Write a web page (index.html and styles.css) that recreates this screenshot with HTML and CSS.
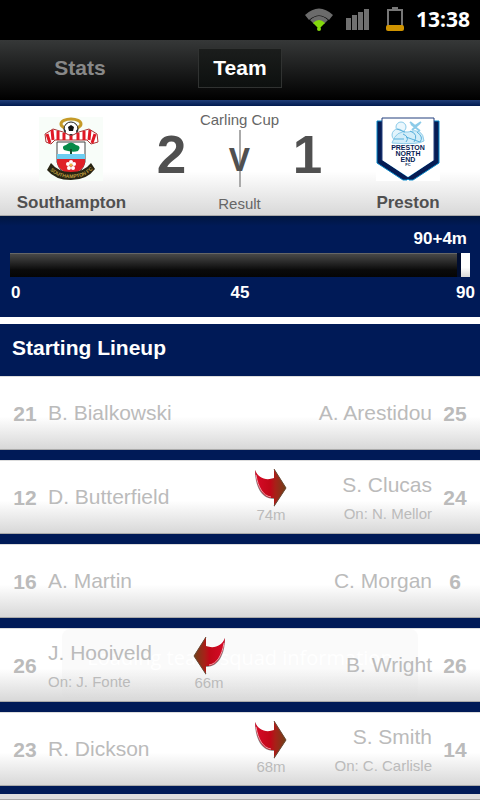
FILE: index.html
```html
<!DOCTYPE html>
<html lang="en">
<head>
    <meta charset="UTF-8">
    <meta name="viewport" content="width=device-width, initial-scale=1.0">
    <title>Southampton v Preston</title>
    <link rel="stylesheet" href="styles.css">
</head>
<body>

    <!-- arrow shared by all the substitutions -->
    <svg class="defs" width="0" height="0" aria-hidden="true">
        <defs>
            <linearGradient id="subRed" x1="0" y1="0" x2="1" y2="0">
                <stop offset="0" stop-color="#d80a28"/>
                <stop offset="0.5" stop-color="#c00818"/>
                <stop offset="0.65" stop-color="#a82018"/>
                <stop offset="1" stop-color="#704018"/>
            </linearGradient>
            <symbol id="subArrow" viewBox="0 0 34 40">
                <path d="M1 2 C1 16 6 31 20 31 V39 L32 20 L20 1 V12 C11 14 4 11 1 2 Z" fill="#555" opacity="0.7"/>
                <path d="M1 2 C4 10 12 13 20 10 V1 L32 20 L20 38 V30 C8 31 2 17 1 2 Z" fill="url(#subRed)"/>
                <path d="M2 7 C4 19 9 28 17 29" fill="none" stroke="#eda0a8" stroke-width="1"/>
                <path d="M20 1 L32 20 L20 38" fill="none" stroke="#6b4a35" stroke-width="1"/>
            </symbol>
        </defs>
    </svg>

    <div class="status-bar">
        <svg width="30" height="26" viewBox="0 0 30 26" aria-hidden="true">
            <path d="M1 8 Q15 -5 29 8 L25 13 Q15 4 5 13 Z" fill="#6b6b6b"/>
            <path d="M6 13 Q15 5 24 13 L20 17 Q15 12 10 17 Z" fill="#6b6b6b"/>
            <path d="M9 16 Q15 10 21 16 L16 21 H14 Z" fill="#84d80c"/>
            <circle cx="15" cy="22" r="2" fill="#84d80c"/>
        </svg>
        <svg width="24" height="24" viewBox="0 0 24 24" aria-hidden="true">
            <path d="M0 10h5v12H0z M6 7h5v15H6z M12 4h5v18h-5z M18 1h5v21h-5z" fill="#707070"/>
        </svg>
        <svg class="battery" width="18" height="26" viewBox="0 0 18 26" aria-hidden="true">
            <path d="M2 19 V3 H16 V19" fill="none" stroke="#777" stroke-width="2"/>
            <rect x="6" y="0" width="6" height="3" fill="#777"/>
            <rect x="0" y="18" width="18" height="6" rx="2" fill="#cf9300"/>
        </svg>
        <span class="clock">13:38</span>
    </div>

    <nav class="tabs">
        <button class="tab" type="button">Stats</button>
        <button class="tab active" type="button">Team</button>
    </nav>

    <section class="match">
        <div class="team">
            <svg class="badge" viewBox="0 0 64 64" aria-hidden="true">
                <rect width="64" height="64" fill="#f8fdf9"/>
                <ellipse cx="32" cy="7" rx="10" ry="5" fill="none" stroke="#c59a28" stroke-width="3"/>
                <circle cx="32" cy="12" r="7" fill="#fff" stroke="#222" stroke-width="1"/>
                <path d="M29 10 l3 -2 3 2 -1 4 h-4z M25 11 l2 3 -1 2z M39 11 l-2 3 1 2z M29 18 l3 -1 3 1 -3 2z" fill="#111"/>
                <path d="M6 17 L14 12 L24 15 L32 19 L40 15 L50 12 L58 17 L59 25 L52 27 L48 23 L16 23 L12 27 L7 25 Z" fill="#fff" stroke="#a33" stroke-width="1"/>
                <path d="M8 17l3 9 M13 13l1 10 M19 14v9 M25 16v7 M32 19v4 M39 16v7 M45 14v9 M51 13l-1 10 M56 17l-3 9" stroke="#e01825" stroke-width="3"/>
                <path d="M18 25 H46 V45 Q44 55 32 60 Q20 55 18 45 Z" fill="#fff" stroke="#444" stroke-width="1"/>
                <path d="M25 33 Q22 29 27 28 Q32 23 37 28 Q43 29 39 34 Q34 36 25 33Z" fill="#078a48"/>
                <path d="M31 32h2v5h-2z" fill="#174f2c"/>
                <rect x="18" y="37" width="28" height="5" fill="#6ccdf0"/>
                <path d="M18 42 H46 V46 Q44 54 32 58 Q20 54 18 46Z" fill="#df2028"/>
                <g fill="#fff">
                    <circle cx="32" cy="45" r="2"/><circle cx="35" cy="47" r="2"/><circle cx="34" cy="51" r="2"/>
                    <circle cx="30" cy="51" r="2"/><circle cx="29" cy="47" r="2"/>
                </g>
                <circle cx="32" cy="48" r="1.5" fill="#ebb743"/>
                <path d="M8 53 L12 46 Q19 55 32 55 Q45 55 52 46 L56 52 Q48 63 32 63 Q16 63 8 53Z" fill="#282513"/>
                <path id="saintsText" d="M10 52 Q18 61 32 61 Q46 61 55 51" fill="none"/>
                <text class="ribbon"><textPath href="#saintsText" startOffset="50%">SOUTHAMPTON FC</textPath></text>
            </svg>
            <h2 class="team-name">Southampton</h2>
        </div>
        <div class="score">2</div>
        <div class="versus">
            <span>Carling Cup</span>
            <span class="v">V</span>
            <span>Result</span>
        </div>
        <div class="score">1</div>
        <div class="team">
            <svg class="badge" viewBox="0 0 64 64" aria-hidden="true">
                <rect width="64" height="64" fill="#fff"/>
                <path d="M1 4 H7 V43 L32 60 L57 43 V4 H63 V46 L37 63 H33 L32 62 L31 63 H27 L1 46 Z" fill="#061c54" stroke="#0788c8" stroke-width="1"/>
                <path d="M6 1 H58 V43 L32 60 L6 43 Z" fill="#fff"/>
                <path d="M6 43 V1 H58 V43" fill="none" stroke="#233e7c" stroke-width="1"/>
                <g fill="none" stroke="#8ccbe9" stroke-width="1">
                    <circle cx="25" cy="10" r="5" fill="#eaf7fd"/>
                    <circle cx="22" cy="18" r="6" fill="#e3f4fc"/>
                    <path d="M34 5 l5 4 6 -4 M36 13 l8 -7 M35 7 l9 7" stroke-width="2"/>
                    <path d="M16 26 Q20 13 32 15 Q47 10 48 24 Q42 28 16 26Z" fill="#d2edf9"/>
                    <path d="M27 17 q7 3 3 8 M34 14 q9 3 4 11 M41 15 q7 5 3 10 M18 22 h10 M30 20 l14 5 M21 12 l8 3" stroke="#57afdb"/>
                </g>
                <g class="badge-text">
                    <text x="32" y="33">PRESTON</text>
                    <text x="32" y="39">NORTH</text>
                    <text x="32" y="45">END</text>
                    <text class="small" x="32" y="49">FC</text>
                </g>
            </svg>
            <h2 class="team-name">Preston</h2>
        </div>
    </section>

    <section class="timeline">
        <div class="elapsed">90+4m</div>
        <div class="bar">
            <div class="played"></div>
            <div class="extra"></div>
        </div>
        <div class="marks">
            <span>0</span>
            <span>45</span>
            <span>90</span>
        </div>
    </section>

    <h1 class="lineup-title">Starting Lineup</h1>

    <main class="lineup">
        <div class="row">
            <span class="number">21</span>
            <div class="player">B. Bialkowski</div>
            <div class="player away">A. Arestidou</div>
            <span class="number away">25</span>
        </div>
        <div class="row">
            <span class="number">12</span>
            <div class="player">D. Butterfield</div>
            <div class="sub away">
                <svg class="arrow" aria-hidden="true"><use href="#subArrow"/></svg>
                <span>74m</span>
            </div>
            <div class="player away swapped">S. Clucas <small>On: N. Mellor</small></div>
            <span class="number away">24</span>
        </div>
        <div class="row">
            <span class="number">16</span>
            <div class="player">A. Martin</div>
            <div class="player away">C. Morgan</div>
            <span class="number away">6</span>
        </div>
        <div class="row">
            <div class="toast">Loading team squad information</div>
            <span class="number">26</span>
            <div class="player swapped">J. Hooiveld <small>On: J. Fonte</small></div>
            <div class="sub">
                <svg class="arrow" aria-hidden="true"><use href="#subArrow"/></svg>
                <span>66m</span>
            </div>
            <div class="player away">B. Wright</div>
            <span class="number away">26</span>
        </div>
        <div class="row">
            <span class="number">23</span>
            <div class="player">R. Dickson</div>
            <div class="sub away">
                <svg class="arrow" aria-hidden="true"><use href="#subArrow"/></svg>
                <span>68m</span>
            </div>
            <div class="player away swapped">S. Smith <small>On: C. Carlisle</small></div>
            <span class="number away">14</span>
        </div>
    </main>

    <footer class="footer"></footer>

</body>
</html>
```
FILE: styles.css
```css
* {
    margin: 0;
    padding: 0;
    box-sizing: border-box;
}

body {
    font-family: "Liberation Sans", Arial, sans-serif;
    background-color: #001a57;
    color: #505050;
}

.defs {
    position: absolute;
}

/* Phone status bar */
.status-bar {
    display: flex;
    justify-content: flex-end;
    align-items: center;
    gap: 12px;
    height: 40px;
    padding-right: 10px;
    background-color: #000;
}

.battery {
    margin-left: 4px;
}

.clock {
    font-family: "Open Sans", "Noto Sans", sans-serif;
    font-size: 21px;
    font-weight: bold;
    line-height: 38px;
    height: 40px;
    color: #fff;
}

/* Tabs */
.tabs {
    display: grid;
    grid-template-columns: repeat(3, 1fr);
    align-items: center;
    justify-items: center;
    height: 66px;
    padding-bottom: 10px;
    background: linear-gradient(#363838, #000) 0 0 / 100% 60px no-repeat, linear-gradient(#00174a 60px, #213f78 60px, #001a50 66px);
}

.tab {
    height: 40px;
    padding: 0 14px;
    font-family: inherit;
    font-size: 21px;
    font-weight: bold;
    color: #888;
    background: none;
    border: 1px solid transparent;
    cursor: pointer;
}

.tab.active {
    color: #fff;
    background: linear-gradient(#1b1d1c, #0d100f);
    border-color: #303231;
}

/* Match header */
.match {
    display: grid;
    grid-template-columns: 143fr 57fr 79fr 57fr 144fr;
    height: 110px;
    background: linear-gradient(#fff 60%, #d8d8d8);
    border-bottom: 1px solid #aaa;
}

.team {
    display: flex;
    flex-direction: column;
    align-items: center;
    gap: 11px;
    padding-top: 11px;
}

.badge {
    width: 64px;
    height: 64px;
}

.ribbon {
    font-size: 5px;
    font-weight: bold;
    text-anchor: middle;
    fill: #c0a040;
}

.badge-text {
    font-size: 7px;
    font-weight: bold;
    text-anchor: middle;
    fill: #061c54;
}

.badge-text .small {
    font-size: 4px;
}

.team-name {
    font-size: 17px;
    line-height: 22px;
}

.score {
    font-size: 53px;
    font-weight: bold;
    line-height: 98px;
    text-align: center;
}

.versus {
    display: flex;
    flex-direction: column;
    align-items: center;
    padding-top: 4px;
    font-size: 15px;
    line-height: 20px;
    white-space: nowrap;
    color: #666;
}

.v {
    width: 100%;
    margin-bottom: 7px;
    font-family: "Open Sans", "Noto Sans", sans-serif;
    font-size: 32px;
    font-weight: bold;
    line-height: 57px;
    text-align: center;
    color: #505050;
    background: linear-gradient(#aaa, #aaa) center / 2px 100% no-repeat;
}

/* Timeline */
.timeline {
    height: 108px;
    padding: 13px 10px 0;
    font-size: 17px;
    font-weight: bold;
    line-height: 20px;
    color: #fff;
    background: linear-gradient(#001640, #001a57 10px);
    border-bottom: 7px solid #fff;
}

.elapsed {
    padding-right: 3px;
    text-align: right;
}

.bar {
    display: flex;
    gap: 4px;
    height: 24px;
    margin: 4px 0 6px;
    background-color: #000d30;
}

.played {
    flex: 1;
    background: linear-gradient(#484848, #0a0a0a 70%, #050505);
    border-top: 1px solid #666;
}

.extra {
    width: 9px;
    background: linear-gradient(#fff 60%, #d8d8d8);
}

.marks {
    display: grid;
    grid-template-columns: 1fr auto 1fr;
    margin: 0 -5px;
}

.marks span:first-child {
    padding-left: 6px;
}

.marks span:last-child {
    text-align: right;
}

/* Lineup */
.lineup-title {
    height: 52px;
    padding-left: 12px;
    font-size: 21px;
    line-height: 48px;
    color: #fff;
}

.lineup {
    display: flex;
    flex-direction: column;
    gap: 10px;
}

/* number, home player, home sub, away sub, away player, number */
.row {
    position: relative;
    isolation: isolate;
    display: grid;
    grid-template-columns: 48px 1fr 62px 62px 1fr 48px;
    align-items: center;
    height: 74px;
    background: linear-gradient(#fff 55%, #d8d8d8);
    border-top: 1px solid #ddd;
    border-bottom: 1px solid #aaa;
    color: #bbb;
}

.number {
    grid-column: 1;
    padding: 2px 0 0 2px;
    font-size: 21px;
    font-weight: bold;
    text-align: center;
}

.number.away {
    grid-column: 6;
    padding: 2px 2px 0 0;
}

.player {
    grid-column: 2;
    font-size: 21px;
    line-height: 28px;
    white-space: nowrap;
}

.player.away {
    grid-column: 5;
    text-align: right;
}

.player.swapped {
    padding-top: 6px;
}

.player small {
    display: block;
    font-size: 15px;
    line-height: 30px;
}

.sub {
    grid-column: 3;
    align-self: start;
    display: flex;
    flex-direction: column;
    align-items: center;
    padding-top: 7px;
    font-size: 15px;
    line-height: 14px;
}

.sub.away {
    grid-column: 4;
}

.arrow {
    width: 34px;
    height: 40px;
    transform: scaleX(-1);
}

.away .arrow {
    transform: none;
}

/* Fading message behind the names */
.toast {
    position: absolute;
    z-index: -1;
    top: 0;
    left: 62px;
    right: 62px;
    height: 72px;
    border-radius: 8px;
    font-family: "Open Sans", "Noto Sans", sans-serif;
    font-size: 20px;
    line-height: 58px;
    text-align: center;
    color: #fff;
    background: linear-gradient(rgba(0, 0, 0, 0.02) 60%, rgba(0, 0, 0, 0));
}

.footer {
    height: 6px;
    margin-top: 8px;
    background-color: #ddd;
    border-bottom: 1px solid #aaa;
}
```
